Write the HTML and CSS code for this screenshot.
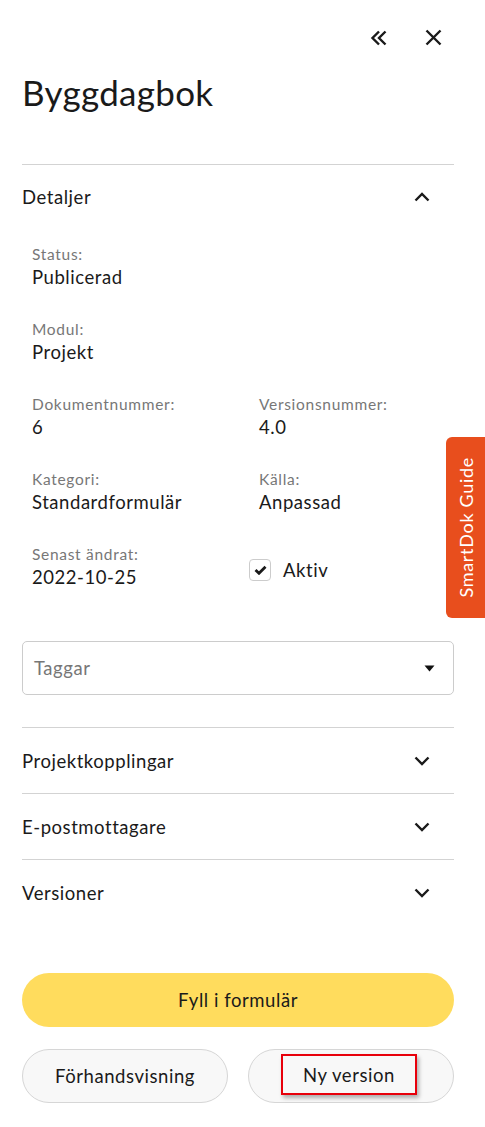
FILE: index.html
```html
<!DOCTYPE html>
<html lang="sv">
<head>
<meta charset="utf-8">
<link rel="stylesheet" href="styles.css">
</head>
<body>
<div class="panel">
  <div class="topbar">
    <button class="icon-btn" aria-label="Minimera">
      <svg width="18" height="16" viewBox="0 0 18 16"><path d="M9 1.5L2.5 8L9 14.5M15.5 1.5L9 8L15.5 14.5" fill="none" stroke="#1a1a1a" stroke-width="2.4"/></svg>
    </button>
    <button class="icon-btn" aria-label="Stäng">
      <svg width="17" height="17" viewBox="0 0 17 17"><path d="M1.5 1.5L15.5 15.5M15.5 1.5L1.5 15.5" fill="none" stroke="#1a1a1a" stroke-width="2.4"/></svg>
    </button>
  </div>
  <h1 class="title">Byggdagbok</h1>

  <section class="section open">
    <div class="section-head">
      <span>Detaljer</span>
      <svg class="chev" width="16" height="10" viewBox="0 0 16 10"><path d="M1.5 8.5L8 2L14.5 8.5" fill="none" stroke="#1a1a1a" stroke-width="2.4"/></svg>
    </div>
    <div class="details">
      <div class="field full"><div class="label">Status:</div><div class="value">Publicerad</div></div>
      <div class="field full"><div class="label">Modul:</div><div class="value">Projekt</div></div>
      <div class="field"><div class="label">Dokumentnummer:</div><div class="value">6</div></div>
      <div class="field"><div class="label">Versionsnummer:</div><div class="value">4.0</div></div>
      <div class="field"><div class="label">Kategori:</div><div class="value">Standardformulär</div></div>
      <div class="field"><div class="label">Källa:</div><div class="value">Anpassad</div></div>
      <div class="field"><div class="label">Senast ändrat:</div><div class="value">2022-10-25</div></div>
      <div class="field check-field">
        <span class="checkbox"><svg width="13" height="10" viewBox="0 0 13 10"><path d="M1.5 5L5 8.3L11.5 1.7" fill="none" stroke="#1a1a1a" stroke-width="2.8"/></svg></span>
        <span class="value">Aktiv</span>
      </div>
    </div>
    <div class="select">
      <span class="placeholder">Taggar</span>
      <svg width="11" height="7" viewBox="0 0 11 7"><path d="M0.5 0.5H10.5L5.5 6.5Z" fill="#111"/></svg>
    </div>
  </section>

  <section class="section">
    <div class="section-head">
      <span>Projektkopplingar</span>
      <svg class="chev" width="16" height="10" viewBox="0 0 16 10"><path d="M1.5 1.5L8 8L14.5 1.5" fill="none" stroke="#1a1a1a" stroke-width="2.4"/></svg>
    </div>
  </section>
  <section class="section">
    <div class="section-head">
      <span>E-postmottagare</span>
      <svg class="chev" width="16" height="10" viewBox="0 0 16 10"><path d="M1.5 1.5L8 8L14.5 1.5" fill="none" stroke="#1a1a1a" stroke-width="2.4"/></svg>
    </div>
  </section>
  <section class="section">
    <div class="section-head">
      <span>Versioner</span>
      <svg class="chev" width="16" height="10" viewBox="0 0 16 10"><path d="M1.5 1.5L8 8L14.5 1.5" fill="none" stroke="#1a1a1a" stroke-width="2.4"/></svg>
    </div>
  </section>

  <div class="actions">
    <button class="btn primary">Fyll i formulär</button>
    <div class="btn-row">
      <button class="btn secondary">Förhandsvisning</button>
      <button class="btn secondary"><span class="highlight">Ny version</span></button>
    </div>
  </div>
</div>
<div class="guide-tab"><span class="guide-text">SmartDok Guide</span></div>
</body>
</html>
```

FILE: styles.css
```css
html, body {
  margin: 0;
  padding: 0;
  background: #fff;
}
body {
  font-family: Lato, "Noto Sans", "Liberation Sans", sans-serif;
  color: #1a1a1a;
  width: 485px;
  height: 1127px;
  position: relative;
  overflow: hidden;
  letter-spacing: 0.55px;
}
.panel {
  padding: 0 31px 0 22px;
}
.topbar {
  display: flex;
  justify-content: flex-end;
  gap: 36px;
  padding-top: 29px;
  padding-right: 12px;
  height: 18px;
}
.icon-btn {
  border: 0;
  background: none;
  padding: 0;
  width: 18px;
  height: 17px;
  display: flex;
  align-items: center;
  justify-content: center;
}
.title {
  margin: 25px 0 0;
  font-size: 35px;
  font-weight: 400;
  line-height: 40px;
  letter-spacing: 0.3px;
  height: 92px;
}
.section {
  border-top: 1px solid #d3d3d3;
}
.section-head {
  display: flex;
  justify-content: space-between;
  align-items: center;
  height: 65px;
  font-size: 18.5px;
  padding-right: 24px;
}
.section.open .section-head {
  height: 64px;
}
.details {
  display: grid;
  grid-template-columns: 227px 1fr;
  row-gap: 30px;
  padding: 15px 0 0 10px;
}
.field.full {
  grid-column: 1 / -1;
}
.label {
  font-size: 15.5px;
  color: #777;
  line-height: 20px;
  letter-spacing: 0.7px;
}
.value {
  font-size: 18.5px;
  line-height: 24px;
  margin-top: 1px;
}
.check-field {
  display: flex;
  align-items: center;
  gap: 12px;
  margin-left: -10px;
  padding-top: 6px;
}
.check-field .value {
  margin-top: 0;
}
.checkbox {
  width: 20px;
  height: 20px;
  border: 1px solid #ccc;
  border-radius: 4px;
  display: flex;
  align-items: center;
  justify-content: center;
}
.select {
  margin: 52px 0 32px;
  height: 52px;
  border: 1px solid #ccc;
  border-radius: 5px;
  display: flex;
  align-items: center;
  justify-content: space-between;
  padding: 0 18px 0 11px;
}
.placeholder {
  font-size: 18.5px;
  color: #777;
}
.actions {
  margin-top: 48px;
  display: flex;
  flex-direction: column;
  gap: 22px;
}
.btn {
  font-family: inherit;
  font-size: 18.5px;
  letter-spacing: 0.55px;
  color: #1a1a1a;
  height: 54px;
  border-radius: 27px;
  cursor: pointer;
  padding: 0;
  display: flex;
  align-items: center;
  justify-content: center;
}
.btn.primary {
  background: #ffdc5d;
  border: 0;
  width: 100%;
}
.btn-row {
  display: flex;
  justify-content: space-between;
}
.btn.secondary {
  width: 206px;
  background: #f8f8f8;
  border: 1px solid #d6d6d6;
}
.highlight {
  box-sizing: border-box;
  width: 136px;
  height: 41px;
  display: flex;
  align-items: center;
  justify-content: center;
  border: 2px solid #e8000b;
  box-shadow: 2px 3px 4px rgba(0,0,0,0.3);
  background: #f8f8f8;
  margin: 0 4px 3px 0;
}
.guide-tab {
  position: absolute;
  left: 446px;
  top: 437px;
  width: 39px;
  height: 181px;
  background: #e84e1d;
  color: #fff;
  border-radius: 6px 0 0 6px;
  display: flex;
  align-items: center;
  justify-content: center;
}
.guide-text {
  writing-mode: vertical-rl;
  transform: rotate(180deg);
  font-size: 18px;
  letter-spacing: 0.7px;
  white-space: nowrap;
}
```
